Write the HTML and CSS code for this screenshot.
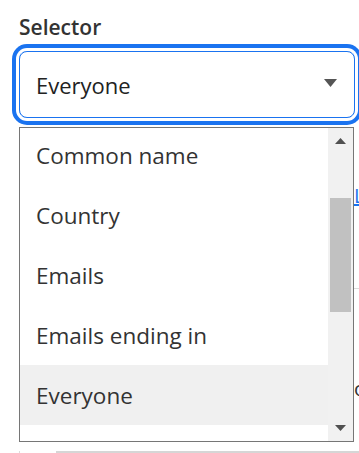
FILE: index.html
```html
<!DOCTYPE html>
<html>
<head>
<meta charset="utf-8">
<link rel="stylesheet" href="styles.css">
</head>
<body>
<div class="page">
  <div class="field">
    <label class="label">Selector</label>
    <div class="select">
      <span class="value">Everyone</span>
      <svg class="caret" width="13" height="8" viewBox="0 0 13 8"><path d="M0 0 H13 L6.5 8 Z" fill="#555"/></svg>
    </div>
  </div>
  <div class="bg">
    <div class="bg-row link-row"><span class="spacer"></span><a class="link">L</a></div>
    <div class="rule"></div>
    <div class="bg-row text-row"><span class="spacer"></span><span class="peek">o</span></div>
    <div class="card">
      <div class="card-line"></div>
    </div>
  </div>
  <div class="listbox">
    <div class="options">
      <div class="opt">Common name</div>
      <div class="opt">Country</div>
      <div class="opt">Emails</div>
      <div class="opt">Emails ending in</div>
      <div class="opt sel">Everyone</div>
      <div class="opt">Group</div>
    </div>
    <div class="scrollbar">
      <svg class="arrow up" width="11" height="6" viewBox="0 0 11 6"><path d="M0 6 H11 L5.5 0 Z" fill="#505050"/></svg>
      <div class="thumb"></div>
      <svg class="arrow down" width="11" height="6" viewBox="0 0 11 6"><path d="M0 0 H11 L5.5 6 Z" fill="#505050"/></svg>
    </div>
  </div>
</div>
</body>
</html>
```
FILE: styles.css
```css
* { box-sizing: border-box; }
html, body {
  margin: 0;
  padding: 0;
  background: #fff;
}
body {
  font-family: "Open Sans", "Noto Sans", sans-serif;
  color: #333;
  width: 359px;
  height: 453px;
  overflow: hidden;
}
.page {
  position: relative;
  width: 359px;
  height: 453px;
  overflow: hidden;
}
.field {
  padding: 13px 0 0 19px;
}
.label {
  display: block;
  font-size: 21px;
  font-weight: 600;
  line-height: 28px;
  color: #333;
}
.select {
  margin-top: 10px;
  width: 336px;
  height: 67px;
  border: 1px solid #1a73f0;
  border-radius: 8px;
  box-shadow: 0 0 0 3px #fff, 0 0 0 7px #1a73f0;
  display: flex;
  align-items: center;
  justify-content: space-between;
  padding: 0 17px 0 16px;
}
.value {
  font-size: 22px;
  color: #222;
}
.caret {
  display: block;
  margin-top: -3px;
}
.bg {
  padding-left: 19px;
}
.bg-row {
  display: grid;
  grid-template-columns: 335px auto;
  white-space: nowrap;
  font-size: 20px;
}
.link-row {
  margin-top: 66px;
  line-height: 24px;
}
.link {
  color: #1a73f0;
  text-decoration: underline;
}
.rule {
  margin-top: 80px;
  height: 1px;
  background: #dcdcdc;
}
.text-row {
  margin-top: 88px;
  line-height: 24px;
  color: #333;
}
.card {
  margin-top: 50px;
  border-left: 1px solid #dcdcdc;
  height: 40px;
  padding-left: 36px;
}
.card-line {
  height: 2px;
  background: #d6d6d6;
  margin-top: 14px;
}
.listbox {
  position: absolute;
  left: 19px;
  top: 127px;
  width: 335px;
  height: 315px;
  border: 1px solid #767676;
  background: #fff;
  display: flex;
  overflow: hidden;
}
.options {
  flex: 1;
  overflow: hidden;
}
.opt {
  height: 60px;
  display: flex;
  align-items: center;
  padding-left: 16px;
  font-size: 22.5px;
  color: #333;
  white-space: nowrap;
}
.opt:first-child {
  margin-top: -3px;
}
.opt.sel {
  background: #f0f0f0;
}
.scrollbar {
  width: 25px;
  background: #f1f1f1;
  position: relative;
}
.arrow {
  position: absolute;
  left: 7px;
}
.arrow.up { top: 10px; }
.arrow.down { bottom: 10px; }
.thumb {
  position: absolute;
  left: 2px;
  right: 2px;
  top: 70px;
  height: 114px;
  background: #c1c1c1;
}
```
